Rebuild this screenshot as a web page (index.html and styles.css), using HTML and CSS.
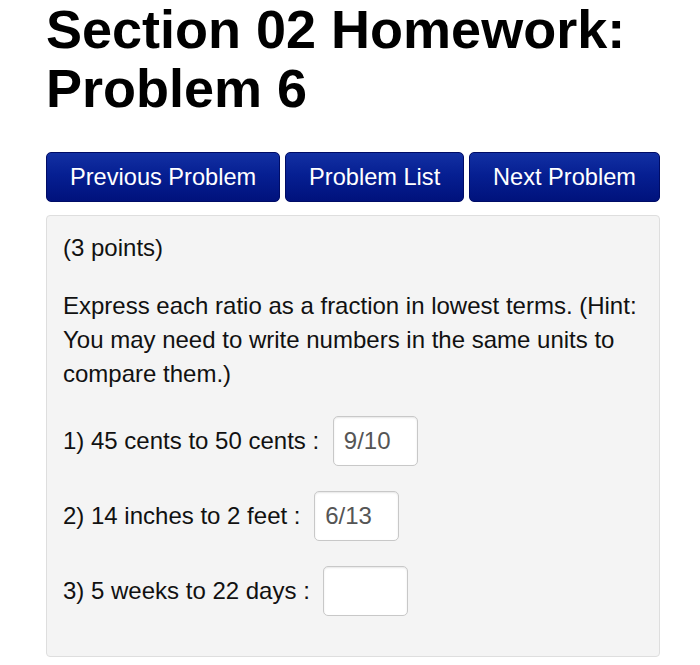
FILE: index.html
```html
<!DOCTYPE html>
<html lang="en">

<head>
    <meta charset="UTF-8">
    <meta name="viewport" content="width=device-width, initial-scale=1.0">
    <title>Section 02 Homework: Problem 6</title>
    <link rel="stylesheet" href="styles.css">
</head>

<body>

    <!-- Title -->
    <h1 class="page-title">Section 02 Homework: Problem 6</h1>

    <!-- Navigation -->
    <div class="nav-buttons">
        <button class="nav-btn">Previous Problem</button>
        <button class="nav-btn">Problem List</button>
        <button class="nav-btn">Next Problem</button>
    </div>

    <!-- Problem body -->
    <div class="problem-box">
        <p>(3 points)</p>
        <p class="statement">Express each ratio as a fraction in lowest terms. (Hint: You may need to write numbers in the same units to compare them.)</p>
        <p class="answer-row">1) 45 cents to 50 cents : <input type="text" class="answer" value="9/10"></p>
        <p class="answer-row">2) 14 inches to 2 feet : <input type="text" class="answer" value="6/13"></p>
        <p class="answer-row">3) 5 weeks to 22 days : <input type="text" class="answer" value=""></p>
    </div>

</body>

</html>
```

FILE: styles.css
```css
body {
    font-family: "Liberation Sans", Arial, Helvetica, sans-serif;
    margin: 0;
    padding: 0 40px 0 46px;
    background-color: #fff;
    color: #111;
}

/* Title */
.page-title {
    font-size: 54px;
    line-height: 59px;
    font-weight: bold;
    color: #000;
    margin: 0 0 34px 0;
}

/* Nav buttons */
.nav-buttons {
    display: flex;
    justify-content: space-between;
}

.nav-btn {
    flex: none;
    height: 50px;
    padding: 0 23px;
    font-family: inherit;
    font-size: 23.6px;
    white-space: nowrap;
    color: #fff;
    background: linear-gradient(to bottom, #1230a3 0%, #061f92 45%, #00127c 100%);
    border: 1px solid #000c66;
    border-radius: 5px;
    cursor: pointer;
}

/* Problem box */
.problem-box {
    margin-top: 13px;
    padding: 15px 15px 15px 16px;
    background-color: #f4f4f4;
    border: 1px solid #dedede;
    border-radius: 4px;
    font-size: 24px;
    line-height: 34px;
}

.problem-box p {
    margin: 0 0 24px 0;
}

.problem-box .statement,
.problem-box .answer-row {
    margin-bottom: 25px;
}

.answer {
    box-sizing: border-box;
    width: 85px;
    height: 50px;
    margin-left: 7px;
    padding: 0 10px;
    font-family: inherit;
    font-size: 24px;
    color: #555;
    background-color: #fff;
    border: 1px solid #c8c8c8;
    border-radius: 5px;
    box-shadow: inset 0 1px 2px rgba(0, 0, 0, 0.1);
    outline: none;
}
```
